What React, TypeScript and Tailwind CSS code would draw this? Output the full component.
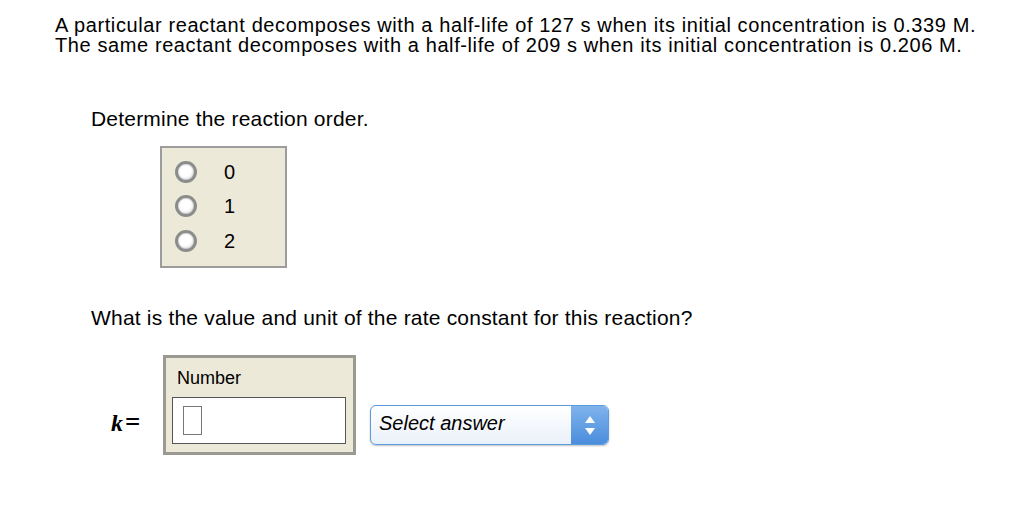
import React from 'react';

const Radio = () => (
  <span className="inline-block w-[22px] h-[22px] rounded-full border-[3px] border-[#8a8d8a] bg-[radial-gradient(circle_at_40%_35%,#ffffff_45%,#d9dbd9_100%)] shadow-[inset_0_0_2px_rgba(0,0,0,0.4)]" />
);

export default function App() {
  const options = ['0', '1', '2'];

  return (
    <div className="w-[1024px] h-[532px] bg-white text-black font-['Liberation_Sans',Arial,sans-serif] overflow-hidden">
      <div className="pl-[55px] pt-[15px] text-[20px] leading-[20px] tracking-[0.6px]">
        <p>A particular reactant decomposes with a half-life of 127 s when its initial concentration is 0.339 M.</p>
        <p>The same reactant decomposes with a half-life of 209 s when its initial concentration is 0.206 M.</p>
      </div>

      <div className="pl-[91px] pt-[52px]">
        <p className="text-[21px] leading-[24px] tracking-[0.2px]">Determine the reaction order.</p>

        <div className="ml-[69px] mt-[15px] w-[127px] h-[122px] bg-[#ece9d8] border-2 border-[#9c9c9c] flex flex-col pl-[13px] pt-[12px] gap-[11.5px]">
          {options.map((o) => (
            <div key={o} className="flex items-center h-[23px]">
              <Radio />
              <span className="ml-[27px] text-[20px] leading-[22px]">{o}</span>
            </div>
          ))}
        </div>

        <p className="mt-[38px] text-[21px] leading-[24px] tracking-[0.2px]">What is the value and unit of the rate constant for this reaction?</p>

        <div className="mt-[25px] flex items-start">
          <div className="w-[72px] pt-[54px] pl-[20px] font-['Liberation_Serif',serif] leading-[26px] flex items-baseline">
            <span className="font-bold italic text-[24px]">k</span>
            <span className="ml-[2px] font-bold text-[27px]">=</span>
          </div>

          <div className="w-[193px] h-[100px] bg-[#ece9d8] border-[3px] border-[#9a9a92] pl-[6px] pt-[10px]">
            <p className="pl-[5px] text-[18px] leading-[20px]">Number</p>
            <div className="mt-[9px] w-[174px] h-[47px] bg-white border border-[#555] flex items-center pl-[10px]">
              <span className="inline-block w-[19px] h-[29px] border border-[#777]" />
            </div>
          </div>

          <div className="ml-[14px] mt-[50px] w-[239px] h-[40px] rounded-[6px] border border-[#5b9be0] bg-gradient-to-b from-white to-[#eaf1fa] flex overflow-hidden shadow-[0_1px_2px_rgba(0,0,0,0.25)]">
            <span className="flex-1 pl-[8px] pt-[6px] italic text-[20px] leading-[22px]">Select answer</span>
            <span className="w-[37px] bg-gradient-to-b from-[#7fb3ec] to-[#4a8ddc] flex flex-col items-center justify-center gap-[5px]">
              <svg width="10" height="7" viewBox="0 0 10 7"><path d="M5 0 L10 7 L0 7 Z" fill="white" /></svg>
              <svg width="10" height="7" viewBox="0 0 10 7"><path d="M0 0 L10 0 L5 7 Z" fill="white" /></svg>
            </span>
          </div>
        </div>
      </div>
    </div>
  );
}
